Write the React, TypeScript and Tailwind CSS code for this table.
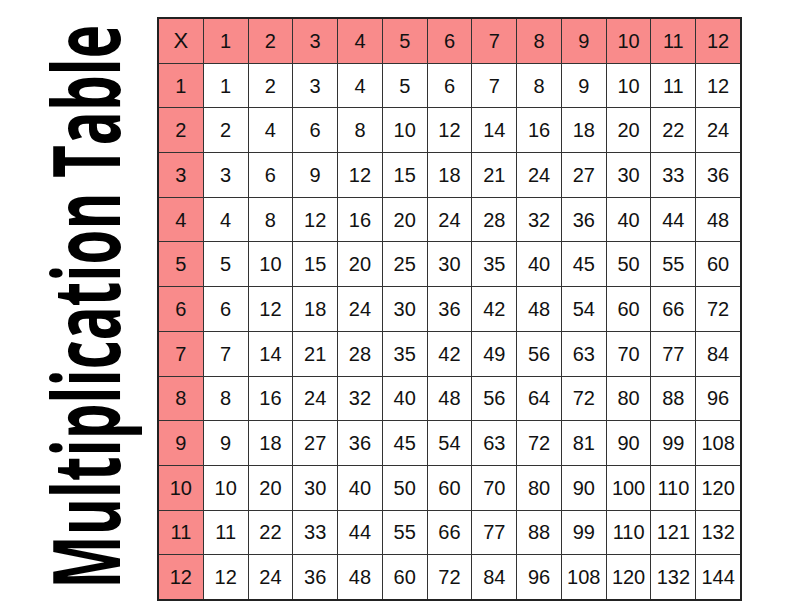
import React from "react";

const nums = Array.from({ length: 12 }, (_, i) => i + 1);

export default function App() {
  const cells: { text: string; head: boolean; big?: boolean }[] = [];
  cells.push({ text: "X", head: true, big: true });
  nums.forEach((n) => cells.push({ text: String(n), head: true }));
  nums.forEach((r) => {
    cells.push({ text: String(r), head: true });
    nums.forEach((c) => cells.push({ text: String(r * c), head: false }));
  });

  return (
    <div className="w-[794px] h-[613px] bg-white flex overflow-hidden">
      <div className="w-[157px] h-[613px] flex items-center justify-center pl-[10px] pt-[1px] overflow-hidden">
        <span
          className="[writing-mode:vertical-rl] rotate-180 scale-y-[0.6] whitespace-nowrap text-[94px] leading-none font-bold text-black"
          style={{ fontFamily: '"Open Sans", "Noto Sans", sans-serif' }}
        >
          Multiplication Table
        </span>
      </div>
      <div className="pt-[17px]">
        <div
          className="w-[585px] h-[584px] border-2 border-[#222] bg-[#333] grid grid-cols-[repeat(13,1fr)] grid-rows-[repeat(13,1fr)] gap-px"
          style={{ fontFamily: '"Liberation Sans", Arial, sans-serif' }}
        >
          {cells.map((c, i) => (
            <div
              key={i}
              className={`flex items-center justify-center text-[#111] ${c.head ? "bg-[#f98b8b]" : "bg-white"} ${c.big ? "text-[22px]" : "text-[20px]"}`}
            >
              {c.text}
            </div>
          ))}
        </div>
      </div>
    </div>
  );
}
